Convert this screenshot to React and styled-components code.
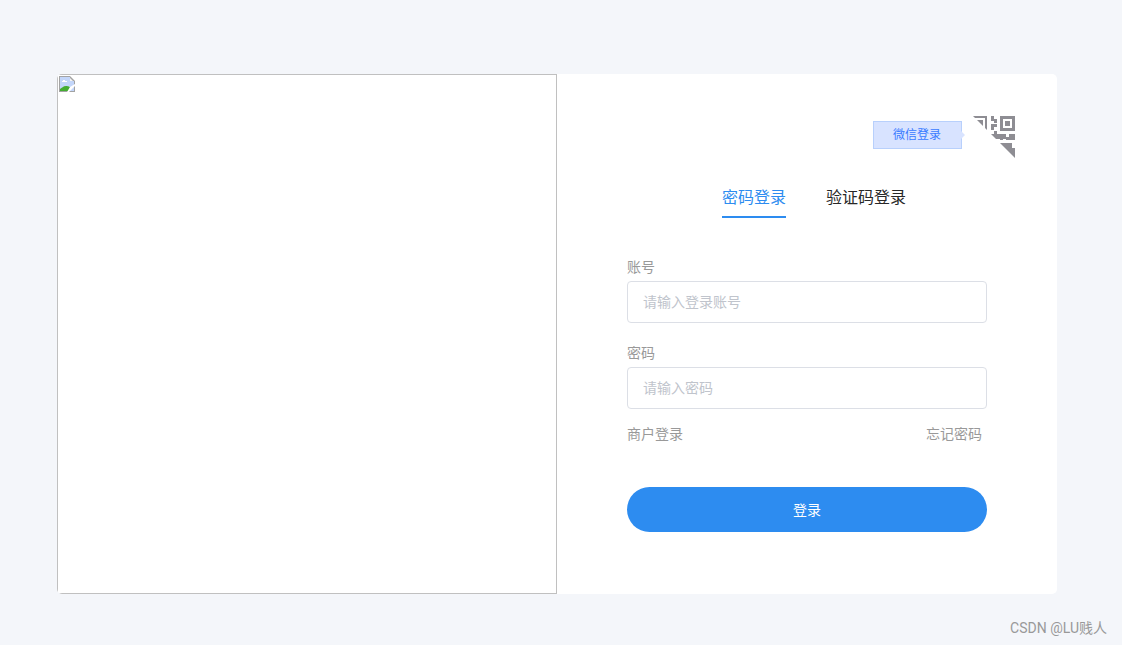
import React, { useState } from 'react';
import styled, { createGlobalStyle } from 'styled-components';

const App = () => {
  const [tab, setTab] = useState('password');

  return (
    <Page>
      <GlobalStyle />
      <Card>
        <Banner>
          <BrokenImage />
        </Banner>
        <Panel>
          <WechatRow>
            <WechatTip>微信登录</WechatTip>
            <QrButton type="button" aria-label="微信登录">
              <QrCorner />
            </QrButton>
          </WechatRow>
          <Tabs>
            <Tab type="button" isActive={tab === 'password'} onClick={() => setTab('password')}>
              密码登录
            </Tab>
            <Tab type="button" isActive={tab === 'code'} onClick={() => setTab('code')}>
              验证码登录
            </Tab>
          </Tabs>
          <Form onSubmit={e => e.preventDefault()}>
            <Field id="account" label="账号" placeholder="请输入登录账号" />
            <Field id="password" label="密码" placeholder="请输入密码" type="password" />
            <Links>
              <TextLink href="#merchant">商户登录</TextLink>
              <TextLink href="#forgot">忘记密码</TextLink>
            </Links>
            <Submit type="submit">登录</Submit>
          </Form>
        </Panel>
      </Card>
      <Watermark>CSDN @LU贱人</Watermark>
    </Page>
  );
};

export default App;

const Field = ({ id, label, placeholder, type = 'text' }) => (
  <FieldWrapper>
    <Label htmlFor={id}>{label}</Label>
    <Input id={id} type={type} placeholder={placeholder} />
  </FieldWrapper>
);

const BrokenImage = () => (
  <svg width="16" height="16" viewBox="0 0 16 16" aria-hidden="true">
    <path d="M0 0h11l5 5v11H0z" fill="#a3a3a3" />
    <path d="M1 1h10v4h4v10H1z" fill="#c3d6fa" />
    <path d="M11 2l3 3h-3z" fill="#f4f4f4" />
    <path d="M3 6V5h1V4h2v1h2v1z" fill="#fff" />
    <path d="M1 15v-2c2-1 3-3 6-3s3 1 4 1v4z" fill="#45ad33" />
    <path d="M16 8v2l-6 6H8l3-5z" fill="#fff" />
  </svg>
);

const QrCorner = () => (
  <svg width="42" height="42" viewBox="0 0 42 42" fill="#8e8d93" aria-hidden="true">
    <defs>
      <clipPath id="qr-corner">
        <path d="M0 0h42v42z" />
      </clipPath>
    </defs>
    <g clipPath="url(#qr-corner)">
      <path d="M0 0h14v14h-2V2H0z" />
      <path d="M4 4h6v6H4z" />
      <path d="M18 0h3v3h3v4h-3V5h-3zM18 8h6v3h-3v3h-3z" />
      <path fillRule="evenodd" d="M27 0h15v15H27zM30 3v9h9V3z" />
      <path d="M32 5h5v5h-5z" />
      <path d="M18 18h3v-3h3v3h9v3h3v-3h6v6h-9v-1h-3v1h-3v-1h-6v-2h-3z" />
      <path d="M27 27h12v5h3v10H27z" />
    </g>
  </svg>
);

const GlobalStyle = createGlobalStyle`
  * {
    box-sizing: border-box;
  }

  body {
    margin: 0;
    background: #f4f6fa;
    font-family: 'Liberation Sans', 'Noto Sans CJK SC', sans-serif;
    font-size: 14px;
    line-height: 20px;
  }

  button,
  input {
    font: inherit;
  }
`;

const Page = styled.div`
  display: flex;
  flex-direction: column;
  align-items: center;
  min-height: 100vh;
  padding: 74px 8px 0 0;
`;

const Card = styled.main`
  display: grid;
  grid-template-columns: 1fr 1fr;
  width: 100%;
  max-width: 1000px;
  min-height: 520px;
  overflow: hidden;
  border-radius: 5px;
  background: #fff;
`;

const Banner = styled.div`
  padding: 1px;
  border: 1px solid #c0c0c0;
`;

const Panel = styled.section`
  display: flex;
  flex-direction: column;
  padding: 42px 70px 60px;
`;

const WechatRow = styled.div`
  display: flex;
  align-items: center;
  justify-content: flex-end;
  gap: 11px;
  margin-right: -28px;
`;

const WechatTip = styled.span`
  position: relative;
  margin-bottom: 4px;
  padding: 3px 20px 3px 19px;
  border: 1px solid #b8d0fc;
  background: #d8e3ff;
  color: #3a7bff;
  font-size: 12px;

  &::after {
    content: '';
    position: absolute;
    top: 9px;
    left: 100%;
    border: 4px solid transparent;
    border-right-width: 0;
    border-left-color: #d8e3ff;
  }
`;

const QrButton = styled.button`
  display: flex;
  padding: 0;
  border: 0;
  background: none;
  cursor: pointer;
`;

const Tabs = styled.div`
  display: flex;
  justify-content: center;
  gap: 40px;
  margin: 20px 0 39px 14px;
`;

const Tab = styled.button.withConfig({ shouldForwardProp: prop => prop !== 'isActive' })`
  height: 40px;
  padding: 2px 0 0;
  border: 0;
  border-bottom: 2px solid ${({ isActive }) => (isActive ? '#2d8cf0' : 'transparent')};
  background: none;
  color: ${({ isActive }) => (isActive ? '#2d8cf0' : '#282828')};
  font-size: 16px;
  cursor: pointer;
`;

const Form = styled.form`
  display: flex;
  flex-direction: column;
`;

const FieldWrapper = styled.div`
  display: flex;
  flex-direction: column;
  gap: 4px;
  margin-bottom: 20px;
`;

const Label = styled.label`
  color: #999;
`;

const Input = styled.input`
  width: 100%;
  height: 42px;
  padding: 0 15px;
  border: 1px solid #dcdfe6;
  border-radius: 4px;
  background: #fff;
  color: #606266;
  outline: none;

  &::placeholder {
    color: #c0c4cc;
  }

  &:focus {
    border-color: #2d8cf0;
  }
`;

const Links = styled.div`
  display: flex;
  justify-content: space-between;
  margin: -5px 5px 43px 0;
`;

const TextLink = styled.a`
  color: #999;
  text-decoration: none;
`;

const Submit = styled.button`
  height: 45px;
  border: 0;
  border-radius: 23px;
  background: #2d8cf0;
  color: #fff;
  cursor: pointer;
`;

const Watermark = styled.footer`
  align-self: flex-end;
  margin: 24px 7px 0 0;
  color: #999;
  font-family: Roboto, 'Noto Sans CJK SC', sans-serif;
`;
